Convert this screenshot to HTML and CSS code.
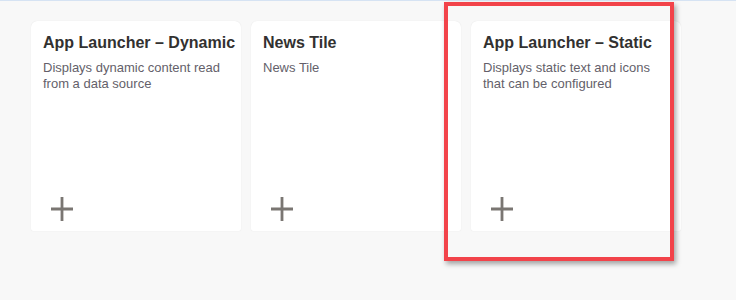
FILE: index.html
```html
<!DOCTYPE html>
<html>
<head>
<meta charset="utf-8">
<link rel="stylesheet" href="styles.css">
</head>
<body>
<div class="page">
  <div class="tiles">
    <div class="card">
      <div class="title">App Launcher – Dynamic</div>
      <div class="desc">Displays dynamic content read from a data source</div>
      <svg class="plus" width="24" height="24" viewBox="0 0 24 24"><path d="M11 0V24M0 12H22" stroke="#7a7672" stroke-width="2.8" fill="none"/></svg>
    </div>
    <div class="card">
      <div class="title">News Tile</div>
      <div class="desc">News Tile</div>
      <svg class="plus" width="24" height="24" viewBox="0 0 24 24"><path d="M11 0V24M0 12H22" stroke="#7a7672" stroke-width="2.8" fill="none"/></svg>
    </div>
    <div class="card">
      <div class="title">App Launcher – Static</div>
      <div class="desc">Displays static text and icons that can be configured</div>
      <svg class="plus" width="24" height="24" viewBox="0 0 24 24"><path d="M11 0V24M0 12H22" stroke="#7a7672" stroke-width="2.8" fill="none"/></svg>
    </div>
  </div>
  <div class="highlight"></div>
</div>
</body>
</html>
```
FILE: styles.css
```css
html, body {
  margin: 0;
  padding: 0;
}
body {
  background: #f8f8f8;
  font-family: "Liberation Sans", Arial, sans-serif;
  width: 736px;
  height: 300px;
  overflow: hidden;
}
.page {
  position: relative;
  height: 300px;
  border-top: 1px solid #d6e3f3;
  box-sizing: border-box;
}
.tiles {
  display: flex;
  gap: 10px;
  padding: 20px 0 0 31px;
}
.card {
  width: 210px;
  height: 210px;
  box-sizing: border-box;
  background: #ffffff;
  border-radius: 6px 6px 2px 2px;
  box-shadow: 0 0 1px rgba(0, 0, 0, 0.12);
  padding: 12px 12px 10px 12px;
  display: flex;
  flex-direction: column;
}
.title {
  font-size: 16px;
  font-weight: bold;
  line-height: 20px;
  color: #323130;
  white-space: nowrap;
  margin-bottom: 7px;
}
.desc {
  font-size: 13px;
  line-height: 16px;
  color: #645f6a;
}
.plus {
  margin-top: auto;
  margin-left: 8px;
  display: block;
}
.highlight {
  position: absolute;
  left: 444px;
  top: 1px;
  width: 230px;
  height: 259px;
  box-sizing: border-box;
  border: 4px solid #f2434a;
  box-shadow: 2px 3px 5px rgba(0, 0, 0, 0.35);
}
```
